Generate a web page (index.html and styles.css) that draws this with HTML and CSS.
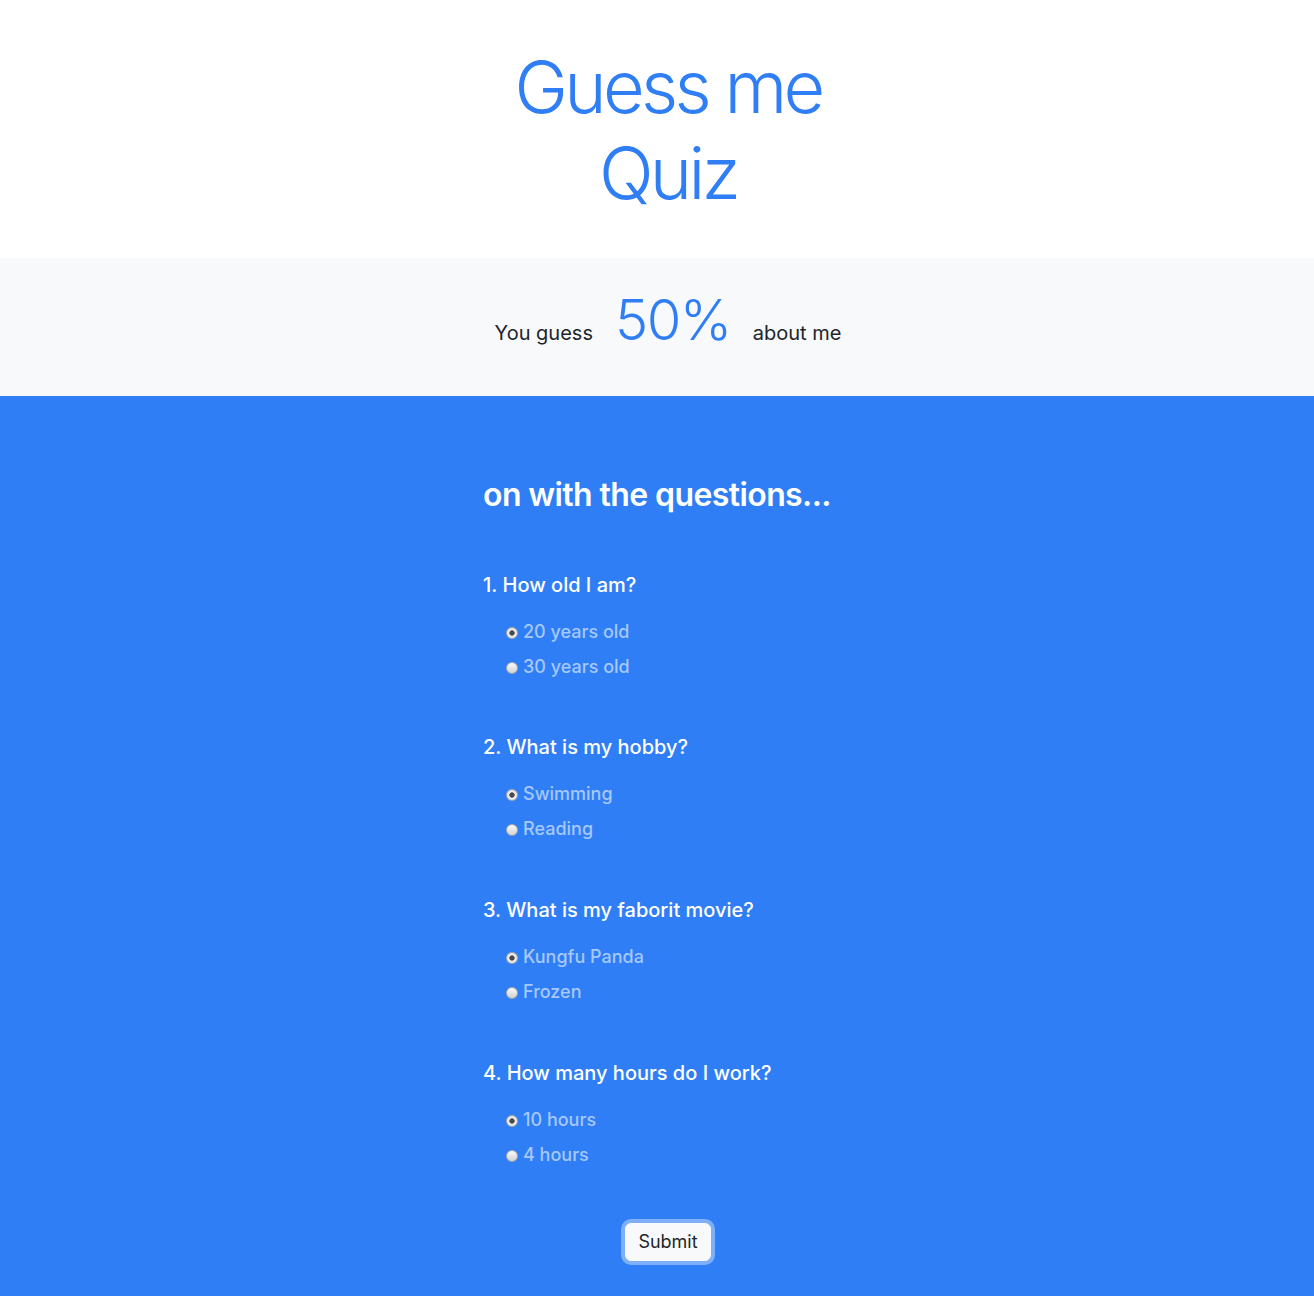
FILE: index.html
```html
<!DOCTYPE html>
<html lang="en">
<head>
<meta charset="utf-8">
<title>Guess me Quiz</title>
<link rel="stylesheet" href="styles.css">
</head>
<body>
<header class="hero">
  <div class="col">
    <h1 class="title">Guess me Quiz</h1>
  </div>
</header>
<section class="score">
  <div class="score-line">
    <span class="score-text">You guess</span>
    <span class="score-num">50%</span>
    <span class="score-text">about me</span>
  </div>
</section>
<main class="quiz">
  <form class="col">
    <h2 class="quiz-title">on with the questions...</h2>

    <div class="question">
      <h3 class="q-title">1. How old I am?</h3>
      <label class="opt"><input type="radio" name="q1" checked><span>20 years old</span></label>
      <label class="opt"><input type="radio" name="q1"><span>30 years old</span></label>
    </div>

    <div class="question">
      <h3 class="q-title">2. What is my hobby?</h3>
      <label class="opt"><input type="radio" name="q2" checked><span>Swimming</span></label>
      <label class="opt"><input type="radio" name="q2"><span>Reading</span></label>
    </div>

    <div class="question">
      <h3 class="q-title">3. What is my faborit movie?</h3>
      <label class="opt"><input type="radio" name="q3" checked><span>Kungfu Panda</span></label>
      <label class="opt"><input type="radio" name="q3"><span>Frozen</span></label>
    </div>

    <div class="question">
      <h3 class="q-title">4. How many hours do I work?</h3>
      <label class="opt"><input type="radio" name="q4" checked><span>10 hours</span></label>
      <label class="opt"><input type="radio" name="q4"><span>4 hours</span></label>
    </div>

    <div class="actions">
      <button type="button" class="btn">Submit</button>
    </div>
  </form>
</main>
</body>
</html>
```
FILE: styles.css
```css
* { box-sizing: border-box; }
html, body { margin: 0; padding: 0; }
body {
  font-family: Inter, "Noto Sans", "Liberation Sans", sans-serif;
  color: #212529;
  background: #2f7ef5;
}
.col {
  width: 370px;
  margin-left: calc(50% - 174px);
}
.hero {
  background: #fff;
  padding: 44px 0 41px;
  text-align: center;
}
.title {
  margin: 0;
  font-size: 72px;
  line-height: 86.4px;
  font-weight: 300;
  color: #2f7ef5;
  letter-spacing: -3.7px;
}
.score {
  background: #f8f9fa;
  height: 138px;
  padding-top: 29px;
}
.score-line {
  display: flex;
  justify-content: center;
  align-items: baseline;
  gap: 22px;
  padding-left: 22px;
}
.score-text {
  font-size: 20px;
  color: #212529;
}
.score-num {
  font-size: 56px;
  line-height: 67px;
  font-weight: 300;
  color: #2f7ef5;
  letter-spacing: -1.5px;
}
.quiz {
  padding: 80px 0 35px;
  color: #fff;
}
.quiz-title {
  margin: 0 0 59px;
  font-size: 32px;
  line-height: 38px;
  font-weight: 600;
  letter-spacing: -0.6px;
}
.question {
  margin-bottom: 51.67px;
}
.q-title {
  margin: 0 0 17px;
  font-size: 20px;
  line-height: 24px;
  font-weight: 500;
}
.opt {
  display: flex;
  align-items: center;
  height: 35px;
  padding-left: 23px;
  font-size: 18px;
  font-weight: 500;
  color: #a6c8fb;
}
.opt input {
  appearance: none;
  -webkit-appearance: none;
  width: 12px;
  height: 12px;
  margin: 3px 5px 0 0;
  border-radius: 50%;
  border: 1px solid #a9a9a9;
  background: linear-gradient(#fbfbfb, #d2d2d2);
  flex: none;
}
.opt input:checked {
  background: radial-gradient(circle, #4a4a4a 0 2.2px, #8c8c8c 2.6px, #efefef 3px, #d8d8d8 100%);
}
.actions {
  display: flex;
  justify-content: center;
  margin-top: 2px;
}
.btn {
  font-family: inherit;
  font-size: 18px;
  line-height: 24px;
  padding: 6px 12px;
  color: #212529;
  background: #f8f9fa;
  border: 1px solid #f8f9fa;
  border-radius: 6px;
  box-shadow: 0 0 0 4px rgba(180, 208, 252, 0.6);
}
```
